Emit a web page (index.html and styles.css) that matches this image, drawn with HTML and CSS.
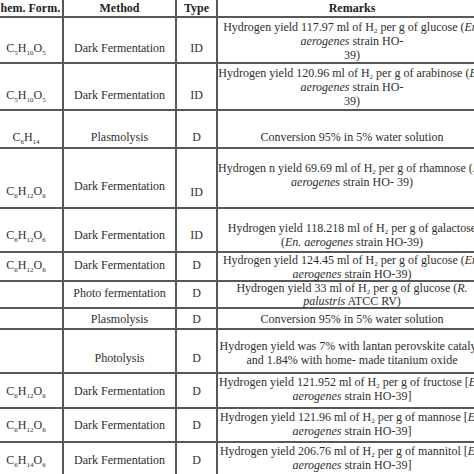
FILE: index.html
```html
<!DOCTYPE html>
<html>
<head>
<meta charset="utf-8">
<link rel="stylesheet" href="styles.css">
</head>
<body>
<div class="sheet">
  <div class="table">
    <div class="row head">
      <div class="c form">Chem. Form.</div>
      <div class="c method">Method</div>
      <div class="c type">Type</div>
      <div class="c rm">Remarks</div>
    </div>
    <div class="row r1">
      <div class="c form">C<sub>5</sub>H<sub>10</sub>O<sub>5</sub></div>
      <div class="c method">Dark Fermentation</div>
      <div class="c type">ID</div>
      <div class="c rm">Hydrogen yield 117.97 ml of H<sub>2</sub> per g of glucose (<i>En.</i><br><i>aerogenes</i> strain HO-<br>39)</div>
    </div>
    <div class="row r2">
      <div class="c form">C<sub>5</sub>H<sub>10</sub>O<sub>5</sub></div>
      <div class="c method">Dark Fermentation</div>
      <div class="c type">ID</div>
      <div class="c rm">Hydrogen yield 120.96 ml of H<sub>2</sub> per g of arabinose (<i>En.</i><br><i>aerogenes</i> strain HO-<br>39)</div>
    </div>
    <div class="row r3">
      <div class="c form">C<sub>6</sub>H<sub>14</sub></div>
      <div class="c method">Plasmolysis</div>
      <div class="c type">D</div>
      <div class="c rm">Conversion 95% in 5% water solution</div>
    </div>
    <div class="row r4">
      <div class="c form">C<sub>6</sub>H<sub>12</sub>O<sub>6</sub></div>
      <div class="c method">Dark Fermentation</div>
      <div class="c type">ID</div>
      <div class="c rm">Hydrogen n yield 69.69 ml of H<sub>2</sub> per g of rhamnose (<i>En.</i><br><i>aerogenes</i> strain HO- 39)</div>
    </div>
    <div class="row r5">
      <div class="c form">C<sub>6</sub>H<sub>12</sub>O<sub>6</sub></div>
      <div class="c method">Dark Fermentation</div>
      <div class="c type">ID</div>
      <div class="c rm">Hydrogen yield 118.218 ml of H<sub>2</sub> per g of galactose<br>(<i>En. aerogenes</i> strain HO-39)</div>
    </div>
    <div class="row r6">
      <div class="c form">C<sub>6</sub>H<sub>12</sub>O<sub>6</sub></div>
      <div class="c method">Dark Fermentation</div>
      <div class="c type">D</div>
      <div class="c rm">Hydrogen yield 124.45 ml of H<sub>2</sub> per g of glucose (<i>En.</i><br><i>aerogenes</i> strain HO-39)</div>
    </div>
    <div class="row r7">
      <div class="c form"></div>
      <div class="c method">Photo fermentation</div>
      <div class="c type">D</div>
      <div class="c rm">Hydrogen yield 33 ml of H<sub>2</sub> per g of glucose (<i>R.</i><br><i>palustris</i> ATCC RV)</div>
    </div>
    <div class="row r8">
      <div class="c form"></div>
      <div class="c method">Plasmolysis</div>
      <div class="c type">D</div>
      <div class="c rm">Conversion 95% in 5% water solution</div>
    </div>
    <div class="row r9">
      <div class="c form"></div>
      <div class="c method">Photolysis</div>
      <div class="c type">D</div>
      <div class="c rm">Hydrogen yield was 7% with lantan perovskite catalyst<br>and 1.84% with home- made titanium oxide</div>
    </div>
    <div class="row r10">
      <div class="c form">C<sub>6</sub>H<sub>12</sub>O<sub>6</sub></div>
      <div class="c method">Dark Fermentation</div>
      <div class="c type">D</div>
      <div class="c rm">Hydrogen yield 121.952 ml of H<sub>2</sub> per g of fructose [<i>En.</i><br><i>aerogenes</i> strain HO-39]</div>
    </div>
    <div class="row r11">
      <div class="c form">C<sub>6</sub>H<sub>12</sub>O<sub>6</sub></div>
      <div class="c method">Dark Fermentation</div>
      <div class="c type">D</div>
      <div class="c rm">Hydrogen yield 121.96 ml of H<sub>2</sub> per g of mannose [<i>En.</i><br><i>aerogenes</i> strain HO-39]</div>
    </div>
    <div class="row r12">
      <div class="c form">C<sub>6</sub>H<sub>14</sub>O<sub>6</sub></div>
      <div class="c method">Dark Fermentation</div>
      <div class="c type">D</div>
      <div class="c rm">Hydrogen yield 206.76 ml of H<sub>2</sub> per g of mannitol [<i>En.</i><br><i>aerogenes</i> strain HO-39]</div>
    </div>
  </div>
</div>
</body>
</html>
```

FILE: styles.css
```css
html, body {
  margin: 0;
  padding: 0;
  background: #ffffff;
}

.sheet {
  width: 474px;
  height: 474px;
  overflow: hidden;
  font-family: "Liberation Serif", "Times New Roman", serif;
  font-size: 12px;
  line-height: 14px;
  color: #2e2e2e;
}

.table {
  margin-left: -10px;
  width: 498px;
}

.row {
  display: grid;
  grid-template-columns: 74px 113px 41px 270px;
  border-bottom: 2px solid #585858;
  box-sizing: border-box;
}

.c {
  border-right: 2px solid #585858;
  text-align: center;
  white-space: nowrap;
  box-sizing: border-box;
}

.c sub {
  font-size: 7px;
  line-height: 0;
  vertical-align: -3px;
}

.rm sub {
  font-size: 7px;
  vertical-align: -2px;
}

.head {
  height: 18px;
  font-weight: bold;
  color: #1e1e1e;
}
.head .c { padding-top: 1px; }

.r1 { height: 46px; }
.r1 .c { padding-top: 23px; }
.r1 .rm { padding-top: 2px; }

.r2 { height: 47px; }
.r2 .c { padding-top: 24px; }
.r2 .rm { padding-top: 2px; }

.r3 { height: 38px; }
.r3 .c { padding-top: 19px; }
.r3 .rm { padding-top: 19px; }

.r4 { height: 60px; }
.r4 .form { padding-top: 35px; }
.r4 .method { padding-top: 30px; }
.r4 .type { padding-top: 36px; }
.r4 .rm { padding-top: 12px; }

.r5 { height: 44px; }
.r5 .c { padding-top: 19px; }
.r5 .rm { padding-top: 12px; }

.r6 { height: 29px; }
.r6 .c { padding-top: 5px; }
.r6 .rm { padding-top: 0; }

.r7 { height: 27px; line-height: 13px; }
.r7 .c { padding-top: 5px; }
.r7 .rm { padding-top: 0; }

.r8 { height: 21px; }
.r8 .c { padding-top: 3px; }

.r9 { height: 44px; }
.r9 .c { padding-top: 21px; }
.r9 .rm { padding-top: 9px; }

.r10 { height: 35px; }
.r10 .c { padding-top: 10px; }
.r10 .rm { padding-top: 1px; }

.r11 { height: 34px; }
.r11 .c { padding-top: 9px; }
.r11 .rm { padding-top: 1px; }

.r12 { height: 40px; }
.r12 .c { padding-top: 10px; }
.r12 .rm { padding-top: 1px; }
```
